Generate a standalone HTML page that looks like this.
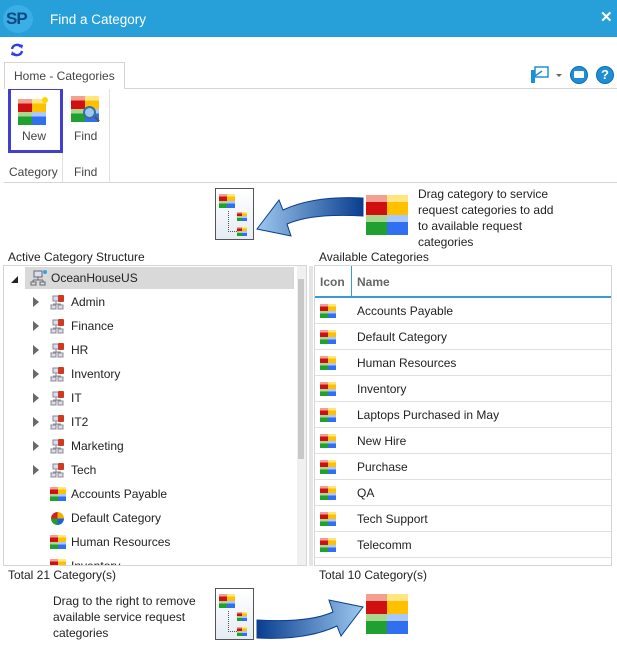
<!DOCTYPE html>
<html><head><meta charset="utf-8"><style>
*{margin:0;padding:0;box-sizing:border-box}
body{width:617px;height:646px;background:#fff;font-family:"Liberation Sans",sans-serif;font-size:12px;color:#222;position:relative;overflow:hidden}
.a{position:absolute}
.t{position:absolute;white-space:nowrap;font-size:12px;line-height:14px}
.ci{position:absolute;width:16px;height:14px}
.ci i{position:absolute;width:8px;height:7px}
.r{background:linear-gradient(#f3a090 0 35%,#d01010 36%)}
.y{background:linear-gradient(#ffe680 0 35%,#ffc000 36%)}
.g{background:linear-gradient(#a8d890 0 35%,#20a030 36%)}
.b{background:linear-gradient(#a8c8ff 0 35%,#3070f0 36%)}
.tri{position:absolute;width:0;height:0;border-top:5px solid transparent;border-bottom:5px solid transparent;border-left:6px solid #6a6a6a}
.row{position:absolute;left:315px;width:296px;height:26px;border-bottom:1px solid #e0e0e0}
</style></head><body>
<!-- title -->
<div class="a" style="left:0;top:0;width:617px;height:37px;background:#27a0da"></div>
<div class="a" style="left:3px;top:5px;width:30px;height:28px;border-radius:50%;background:#3aaee6"></div>
<div class="t" style="left:6px;top:10px;font-size:17px;line-height:18px;font-weight:bold;color:#0d4a80;letter-spacing:-1px">SP</div>
<div class="t" style="left:50px;top:12px;font-size:13.5px;line-height:16px;color:#fff">Find a Category</div>
<div class="t" style="left:600px;top:11px;font-size:15px;font-weight:bold;color:#fff">✕</div>
<!-- refresh -->
<svg class="a" style="left:9px;top:42px" width="16" height="16" viewBox="0 0 16 16"><path d="M3 7a5 5 0 0 1 9-2" stroke="#2d3fe0" stroke-width="2.4" fill="none"/><path d="M10 2l4 1-1 4z" fill="#2d3fe0"/><path d="M13 9a5 5 0 0 1-9 2" stroke="#2d3fe0" stroke-width="2.4" fill="none"/><path d="M6 14l-4-1 1-4z" fill="#2d3fe0"/></svg>
<!-- tab -->
<div class="a" style="left:4px;top:62px;width:121px;height:27px;border:1px solid #d5d5d5;border-bottom:none;background:#fff;z-index:2"></div>
<div class="t" style="left:14px;top:69px;color:#444;z-index:3">Home - Categories</div>
<div class="a" style="left:4px;top:88px;width:613px;height:95px;border-top:1px solid #d5d5d5;border-bottom:1px solid #d5d5d5"></div>
<div class="a" style="left:62px;top:89px;width:1px;height:93px;background:#e0e0e0"></div>
<div class="a" style="left:109px;top:89px;width:1px;height:93px;background:#e0e0e0"></div>
<!-- right icons -->
<svg class="a" style="left:530px;top:66px" width="20" height="18" viewBox="0 0 20 18"><rect x="5" y="1" width="13" height="10" fill="none" stroke="#1e8fd6" stroke-width="1.5"/><rect x="1" y="4" width="4" height="13" fill="#1e8fd6"/><path d="M5 10l7-5" stroke="#1e8fd6" stroke-width="1.5"/></svg>
<div class="a" style="left:556px;top:74px;border-left:3px solid transparent;border-right:3px solid transparent;border-top:3px solid #666"></div>
<div class="a" style="left:570px;top:66px;width:18px;height:18px;border-radius:50%;background:#1e8fd6;border:1px solid #0d6eb0"></div>
<div class="a" style="left:574px;top:71px;width:10px;height:7px;background:#fff;border-radius:1px"></div>
<div class="a" style="left:596px;top:66px;width:18px;height:18px;border-radius:50%;background:#1e8fd6;border:1px solid #0d6eb0;color:#fff;font-weight:bold;font-size:13px;line-height:16px;text-align:center">?</div>
<!-- New -->
<div class="a" style="left:8px;top:87px;width:55px;height:66px;border:3px solid #4040cc"></div>
<div class="ci" style="left:18px;top:99px;width:28px;height:26px"><i class="r" style="width:14px;height:13px;left:0;top:0"></i><i class="y" style="width:14px;height:13px;left:14px;top:0"></i><i class="g" style="width:14px;height:13px;left:0;top:13px"></i><i class="b" style="width:14px;height:13px;left:14px;top:13px"></i></div>
<div class="a" style="left:42px;top:97px;width:6px;height:6px;border-radius:50%;background:#ffd400"></div>
<div class="t" style="left:22px;top:129px;color:#444">New</div>
<div class="ci" style="left:71px;top:96px;width:28px;height:26px"><i class="r" style="width:14px;height:13px;left:0;top:0"></i><i class="y" style="width:14px;height:13px;left:14px;top:0"></i><i class="g" style="width:14px;height:13px;left:0;top:13px"></i><i class="b" style="width:14px;height:13px;left:14px;top:13px"></i></div>
<div class="a" style="left:83px;top:106px;width:13px;height:13px;border-radius:50%;background:#9cc8ec;border:2px solid #3a6ea0"></div>
<div class="a" style="left:94px;top:118px;width:6px;height:2px;background:#555;transform:rotate(45deg)"></div>
<div class="t" style="left:74px;top:129px;color:#444">Find</div>
<div class="t" style="left:9px;top:165px;color:#444">Category</div>
<div class="t" style="left:74px;top:165px;color:#444">Find</div>
<!-- top drag -->
<div class="a" style="left:215px;top:188px;width:39px;height:52px;background:linear-gradient(#fff,#e6ecf4);border:1px solid #555"></div>
<div class="ci" style="left:219px;top:194px"><i class="r"></i><i class="y" style="left:8px"></i><i class="g" style="top:7px"></i><i class="b" style="left:8px;top:7px"></i></div>
<div class="ci" style="left:237px;top:212px;width:10px;height:9px"><i class="r" style="width:5px;height:4px"></i><i class="y" style="left:5px;width:5px;height:4px"></i><i class="g" style="top:4px;width:5px;height:5px"></i><i class="b" style="left:5px;top:4px;width:5px;height:5px"></i></div>
<div class="ci" style="left:237px;top:227px;width:10px;height:9px"><i class="r" style="width:5px;height:4px"></i><i class="y" style="left:5px;width:5px;height:4px"></i><i class="g" style="top:4px;width:5px;height:5px"></i><i class="b" style="left:5px;top:4px;width:5px;height:5px"></i></div>
<div class="a" style="left:228px;top:211px;width:9px;height:21px;border-left:1px dotted #555;border-bottom:1px dotted #555"></div>
<svg class="a" style="left:255px;top:196px" width="110" height="46" viewBox="0 0 110 46"><defs><linearGradient id="g1" x1="0" x2="1"><stop offset="0" stop-color="#9cc8ee"/><stop offset="1" stop-color="#0a3d8f"/></linearGradient></defs><path d="M108 2C70 0 45 6 28 14L24 4 2 33 36 40 32 28C50 20 75 18 108 20Z" fill="url(#g1)" stroke="#0a3d8f" stroke-width="1"/></svg>
<div class="ci" style="left:366px;top:195px;width:42px;height:40px"><i class="r" style="width:21px;height:20px"></i><i class="y" style="left:21px;width:21px;height:20px"></i><i class="g" style="top:20px;width:21px;height:20px"></i><i class="b" style="left:21px;top:20px;width:21px;height:20px"></i></div>
<div class="t" style="left:418px;top:186px;line-height:16px">Drag category to service<br>request categories to add<br>to available request<br>categories</div>
<!-- left panel -->
<div class="t" style="left:8px;top:250px">Active Category Structure</div>
<div class="a" style="left:3px;top:265px;width:304px;height:301px;border:1px solid #d5d5d5"></div>
<div class="a" style="left:297px;top:266px;width:9px;height:299px;background:#f0f0f0"></div>
<div class="a" style="left:298px;top:279px;width:6px;height:180px;background:#c8c8c8"></div>
<div class="a" style="left:25px;top:267px;width:269px;height:22px;background:#d9d9d9"></div>
<div class="a" style="left:11px;top:276px;border-left:7px solid transparent;border-bottom:7px solid #222"></div>
<svg class="a" style="left:30px;top:270px" width="18" height="16" viewBox="0 0 18 16"><rect x="4" y="1" width="8" height="6" fill="#dde" stroke="#667"/><path d="M8 7v3M3 10h10M3 10v2M13 10v2" stroke="#667"/><rect x="1" y="12" width="5" height="3" fill="#ddd" stroke="#667"/><rect x="10" y="12" width="5" height="3" fill="#ddd" stroke="#667"/><circle cx="15" cy="2" r="2" fill="#3aa0e0"/></svg>
<div class="t" style="left:51px;top:271px">OceanHouseUS</div>
<div id="tree" style="position:absolute;left:0;top:0;width:296px;height:565px;overflow:hidden"></div>
<!-- splitter -->
<div class="a" style="left:309px;top:266px;width:4px;height:300px;background:#e4e4e4"></div>
<!-- right -->
<div class="t" style="left:319px;top:250px">Available Categories</div>
<div class="a" style="left:314px;top:265px;width:298px;height:301px;border:1px solid #d5d5d5"></div>
<div class="a" style="left:315px;top:296px;width:296px;height:2px;background:#3a9ad9"></div>
<div class="a" style="left:351px;top:266px;width:1px;height:30px;background:#3a9ad9"></div>
<div class="t" style="left:320px;top:275px;font-weight:bold;color:#666">Icon</div>
<div class="t" style="left:357px;top:275px;font-weight:bold;color:#666">Name</div>
<div id="grid"></div>
<div class="t" style="left:8px;top:568px">Total 21 Category(s)</div>
<div class="t" style="left:319px;top:568px">Total 10 Category(s)</div>
<!-- bottom drag -->
<div class="t" style="left:53px;top:593px;line-height:16px">Drag to the right to remove<br>available service request<br>categories</div>
<div class="a" style="left:215px;top:588px;width:39px;height:52px;background:linear-gradient(#fff,#e6ecf4);border:1px solid #555"></div>
<div class="ci" style="left:219px;top:594px"><i class="r"></i><i class="y" style="left:8px"></i><i class="g" style="top:7px"></i><i class="b" style="left:8px;top:7px"></i></div>
<div class="ci" style="left:237px;top:612px;width:10px;height:9px"><i class="r" style="width:5px;height:4px"></i><i class="y" style="left:5px;width:5px;height:4px"></i><i class="g" style="top:4px;width:5px;height:5px"></i><i class="b" style="left:5px;top:4px;width:5px;height:5px"></i></div>
<div class="ci" style="left:237px;top:627px;width:10px;height:9px"><i class="r" style="width:5px;height:4px"></i><i class="y" style="left:5px;width:5px;height:4px"></i><i class="g" style="top:4px;width:5px;height:5px"></i><i class="b" style="left:5px;top:4px;width:5px;height:5px"></i></div>
<div class="a" style="left:228px;top:611px;width:9px;height:21px;border-left:1px dotted #555;border-bottom:1px dotted #555"></div>
<svg class="a" style="left:255px;top:594px" width="110" height="46" viewBox="0 0 110 46"><defs><linearGradient id="g2" x1="0" x2="1"><stop offset="0" stop-color="#0a3d8f"/><stop offset="1" stop-color="#9cc8ee"/></linearGradient></defs><path d="M2 44C40 46 65 40 82 32L86 42 108 13 74 6 78 18C60 26 35 28 2 26Z" fill="url(#g2)" stroke="#0a3d8f" stroke-width="1"/></svg>
<div class="ci" style="left:366px;top:594px;width:42px;height:40px"><i class="r" style="width:21px;height:20px"></i><i class="y" style="left:21px;width:21px;height:20px"></i><i class="g" style="top:20px;width:21px;height:20px"></i><i class="b" style="left:21px;top:20px;width:21px;height:20px"></i></div>
<script>
var ci='<i class="r"></i><i class="y" style="left:8px"></i><i class="g" style="top:7px"></i><i class="b" style="left:8px;top:7px"></i>';
var h='';
["Admin","Finance","HR","Inventory","IT","IT2","Marketing","Tech"].forEach(function(n,i){var y=302+i*24;
h+='<div class="tri" style="left:33px;top:'+(y-5)+'px"></div>';
h+='<svg class="a" style="left:50px;top:'+(y-8)+'px" width="16" height="16" viewBox="0 0 16 16"><rect x="3" y="2" width="7" height="5" fill="#dde" stroke="#889"/><path d="M6 7v3M3 10h8" stroke="#889"/><rect x="1" y="11" width="5" height="4" fill="#ddd" stroke="#889"/><rect x="8" y="11" width="5" height="4" fill="#ddd" stroke="#889"/><rect x="8" y="1" width="6" height="7" rx="1" fill="#d03a20"/></svg>';
h+='<div class="t" style="left:71px;top:'+(y-7)+'px">'+n+'</div>';});
["Accounts Payable","Default Category","Human Resources","Inventory"].forEach(function(n,i){var y=494+i*24;
if(i==1)h+='<div class="a" style="left:51px;top:'+(y-6)+'px;width:13px;height:13px;border-radius:50%;background:conic-gradient(#f0b000 0 25%,#2060d0 0 50%,#20a030 0 75%,#d02020 0)"></div>';
else h+='<div class="ci" style="left:50px;top:'+(y-7)+'px">'+ci+'</div>';
h+='<div class="t" style="left:71px;top:'+(y-7)+'px">'+n+'</div>';});
document.getElementById('tree').innerHTML=h;
h='';
["Accounts Payable","Default Category","Human Resources","Inventory","Laptops Purchased in May","New Hire","Purchase","QA","Tech Support","Telecomm"].forEach(function(n,i){var y=298+i*26;
h+='<div class="row" style="top:'+y+'px"></div><div class="ci" style="left:320px;top:'+(y+6)+'px">'+ci+'</div><div class="t" style="left:357px;top:'+(y+6)+'px">'+n+'</div>';});
document.getElementById('grid').innerHTML=h;
</script>
</body></html>
